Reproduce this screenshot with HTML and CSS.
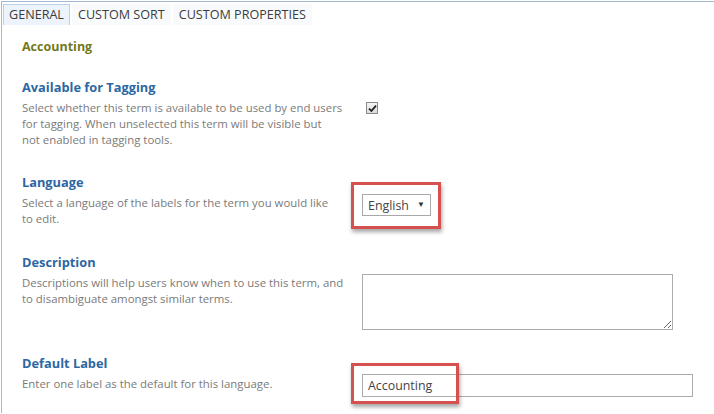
FILE: index.html
```html
<!DOCTYPE html>
<html>
<head>
<meta charset="utf-8">
<link rel="stylesheet" href="styles.css">
</head>
<body>
<div class="frame">
  <div class="tabs">
    <div class="tab active">GENERAL</div>
    <div class="tab">CUSTOM SORT</div>
    <div class="tab">CUSTOM PROPERTIES</div>
  </div>
  <div class="content">
    <h1 class="term">Accounting</h1>

    <div class="section s-tag">
      <div class="info">
        <h2>Available for Tagging</h2>
        <p>Select whether this term is available to be used by end users<br>for tagging. When unselected this term will be visible but<br>not enabled in tagging tools.</p>
      </div>
      <div class="control c-check">
        <span class="check"><svg width="9" height="9" viewBox="0 0 9 9"><path d="M1 4.6 L3.4 7 L8 1.6" fill="none" stroke="#222" stroke-width="1.8"/></svg></span>
      </div>
    </div>

    <div class="section s-lang">
      <div class="info">
        <h2>Language</h2>
        <p>Select a language of the labels for the term you would like<br>to edit.</p>
      </div>
      <div class="control c-select">
        <div class="select"><span>English</span><span class="arrow">▼</span></div>
        <div class="callout callout-select"></div>
      </div>
    </div>

    <div class="section s-desc">
      <div class="info">
        <h2>Description</h2>
        <p>Descriptions will help users know when to use this term, and<br>to disambiguate amongst similar terms.</p>
      </div>
      <div class="control c-textarea">
        <textarea class="textarea"></textarea>
      </div>
    </div>

    <div class="section s-label">
      <div class="info">
        <h2>Default Label</h2>
        <p>Enter one label as the default for this language.</p>
      </div>
      <div class="control c-input">
        <input class="input" type="text" value="Accounting">
        <div class="callout callout-input"></div>
      </div>
    </div>
  </div>
</div>
</body>
</html>
```
FILE: styles.css
```css
html, body {
  margin: 0;
  padding: 0;
  background: #ffffff;
}
body {
  font-family: "Open Sans", "Noto Sans", sans-serif;
  width: 714px;
  height: 414px;
  overflow: hidden;
}
.frame {
  margin-top: 1px;
  margin-left: 1px;
  border-top: 1px solid #a3b9d2;
  border-left: 1px solid #a3b9d2;
  height: 412px;
  box-sizing: border-box;
}
.tabs {
  display: flex;
  padding: 2px 0 0 1px;
  height: 21px;
}
.tab {
  font-size: 12.6px;
  color: #3c3c3c;
  line-height: 19px;
  padding: 0 5px 0 5px;
  margin-right: 2px;
  background: #f8fafc;
  border: 1px solid transparent;
  border-bottom: none;
}
.tab.active {
  background: #edf3fa;
  border: 1px solid #b9d0e8;
  border-bottom: none;
}
.content {
  padding-left: 20px;
}
.term {
  margin: 12px 0 0 0;
  font-size: 12.5px;
  line-height: 20px;
  font-weight: 700;
  color: #737a1c;
}
.section {
  display: flex;
}
.info {
  width: 340px;
  flex: none;
}
.info h2 {
  margin: 0 0 3px 0;
  font-size: 12.8px;
  line-height: 20px;
  font-weight: 700;
  color: #2c67a3;
}
.info p {
  margin: 0;
  font-size: 11.4px;
  line-height: 16px;
  color: #7a7a7a;
  white-space: nowrap;
}
.s-tag { margin-top: 20px; }
.s-lang { margin-top: 24px; }
.s-desc { margin-top: 25px; }
.s-label { margin-top: 23px; }
.control {
  position: relative;
}
.c-check { padding: 25px 0 0 4px; }
.c-select, .c-textarea { padding-top: 22px; }
.c-input { padding-top: 21px; }
.check {
  display: flex;
  align-items: center;
  justify-content: center;
  width: 10px;
  height: 10px;
  border: 1px solid #8a8a8a;
  background: linear-gradient(#f4f4f4, #dcdcdc);
}
.select {
  display: flex;
  align-items: center;
  justify-content: space-between;
  width: 69px;
  height: 22px;
  box-sizing: border-box;
  border: 1px solid #a8a8a8;
  padding: 0 5px 0 5px;
  font-size: 12.4px;
  color: #444444;
}
.select .arrow {
  font-size: 8px;
  color: #333333;
  margin-bottom: 3px;
}
.textarea {
  display: block;
  width: 311px;
  height: 56px;
  box-sizing: border-box;
  border: 1px solid #ababab;
  margin: 0;
  padding: 2px;
  font-family: inherit;
}
.input {
  display: block;
  width: 331px;
  height: 23px;
  box-sizing: border-box;
  border: 1px solid #ababab;
  margin: 0;
  padding: 0 5px;
  font-family: "Open Sans", "Noto Sans", sans-serif;
  font-size: 12.4px;
  color: #444444;
}
.callout {
  position: absolute;
  border: 3px solid #d5504e;
  box-shadow: 1px 3px 4px rgba(0, 0, 0, 0.35);
  box-sizing: border-box;
}
.callout-select {
  left: -11px;
  top: 10px;
  width: 90px;
  height: 47px;
}
.callout-input {
  left: -11px;
  top: 10px;
  width: 108px;
  height: 41px;
}
```
